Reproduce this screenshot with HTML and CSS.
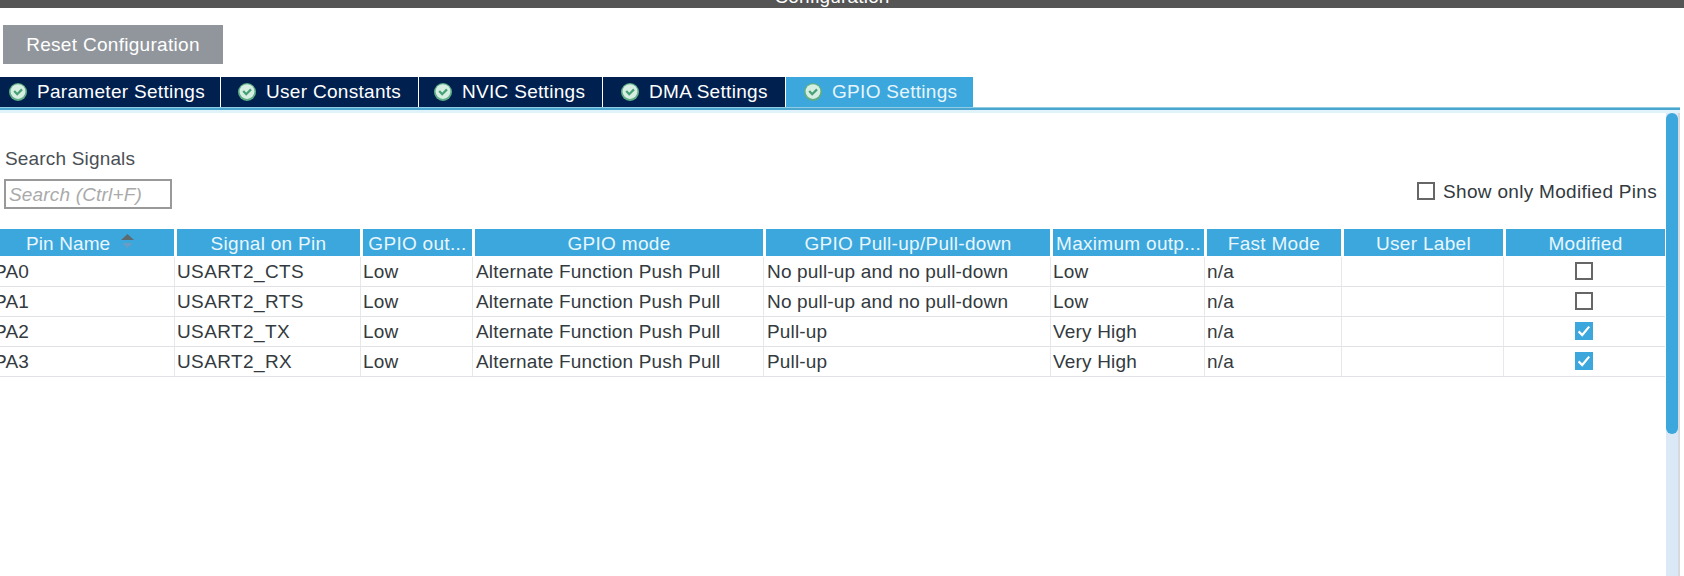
FILE: index.html
```html
<!DOCTYPE html>
<html lang="en">
<head>
  <meta charset="UTF-8" />
  <title>Configuration</title>
  <link rel="stylesheet" href="styles.css">
</head>
<body>

  <div class="titlebar"><span>Configuration</span></div>

  <div class="toolbar">
    <button class="reset" type="button">Reset Configuration</button>
  </div>

  <!-- tab icon is reused through <use> -->
  <svg class="defs" width="0" height="0">
    <symbol id="ok" viewBox="0 0 18 18">
      <circle cx="9" cy="9" r="9" fill="#5fae86"/>
      <circle cx="9" cy="8.6" r="7.4" fill="#d6efe2"/>
      <path d="M5.2 8 8.2 11.2 13 6.4" fill="none" stroke="#46a075" stroke-width="2.2"/>
    </symbol>
    <symbol id="tick" viewBox="0 0 18 18">
      <path d="M3.6 9.4 7.2 13 14.2 4.6" fill="none" stroke="#fff" stroke-width="2.2"/>
    </symbol>
  </svg>

  <div class="tabs">
    <div class="tab tab-1"><svg class="tab-icon"><use href="#ok"/></svg>Parameter Settings</div>
    <div class="tab tab-2"><svg class="tab-icon"><use href="#ok"/></svg>User Constants</div>
    <div class="tab tab-3"><svg class="tab-icon"><use href="#ok"/></svg>NVIC Settings</div>
    <div class="tab tab-4"><svg class="tab-icon"><use href="#ok"/></svg>DMA Settings</div>
    <div class="tab tab-5 active"><svg class="tab-icon"><use href="#ok"/></svg>GPIO Settings</div>
  </div>
  <div class="tab-line"></div>

  <div class="panel">
    <div class="content">

      <div class="search-row">
        <div class="search">
          <label for="search">Search Signals</label>
          <input id="search" type="text" placeholder="Search (Ctrl+F)" />
        </div>
        <div class="only-modified">
          <span class="box"></span>
          <span class="only-text">Show only Modified Pins</span>
        </div>
      </div>

      <div class="pins">
        <div class="head">
          <div class="sortable">Pin Name
            <svg class="sort" viewBox="0 0 13 14" width="13" height="14">
              <path d="M6.5 0 13 6H0Z" fill="#5d6a70"/>
              <path d="M1.5 9H11.5L6.5 14Z" fill="#6b9dc4"/>
            </svg>
          </div>
          <div>Signal on Pin</div>
          <div>GPIO out...</div>
          <div>GPIO mode</div>
          <div>GPIO Pull-up/Pull-down</div>
          <div>Maximum outp...</div>
          <div>Fast Mode</div>
          <div>User Label</div>
          <div>Modified</div>
        </div>

        <div class="row">
          <div class="pin">PA0</div><div>USART2_CTS</div><div>Low</div>
          <div class="wide">Alternate Function Push Pull</div><div class="wide">No pull-up and no pull-down</div>
          <div>Low</div><div>n/a</div><div></div>
          <div class="check"><span class="box"></span></div>
        </div>
        <div class="row">
          <div class="pin">PA1</div><div>USART2_RTS</div><div>Low</div>
          <div class="wide">Alternate Function Push Pull</div><div class="wide">No pull-up and no pull-down</div>
          <div>Low</div><div>n/a</div><div></div>
          <div class="check"><span class="box"></span></div>
        </div>
        <div class="row">
          <div class="pin">PA2</div><div>USART2_TX</div><div>Low</div>
          <div class="wide">Alternate Function Push Pull</div><div class="wide">Pull-up</div>
          <div>Very High</div><div>n/a</div><div></div>
          <div class="check"><span class="box on"><svg width="18" height="18"><use href="#tick"/></svg></span></div>
        </div>
        <div class="row">
          <div class="pin">PA3</div><div>USART2_RX</div><div>Low</div>
          <div class="wide">Alternate Function Push Pull</div><div class="wide">Pull-up</div>
          <div>Very High</div><div>n/a</div><div></div>
          <div class="check"><span class="box on"><svg width="18" height="18"><use href="#tick"/></svg></span></div>
        </div>
      </div>

    </div>

    <div class="scrollbar"><div class="thumb"></div></div>
  </div>

</body>
</html>
```

FILE: styles.css
```css
html, body {
  height: 100%;
}
body {
  margin: 0;
  width: 1684px;
  height: 576px;
  overflow: hidden;
  background: #ffffff;
  font-family: "Liberation Sans", Arial, sans-serif;
  font-size: 19px;
  letter-spacing: 0.17px;
  color: #333a40;
  display: flex;
  flex-direction: column;
}
.defs {
  position: absolute;
}

/* title bar, its text is cut off at the top */
.titlebar {
  flex: 0 0 8px;
  background: #555555;
  color: #ffffff;
  overflow: hidden;
  text-align: center;
  line-height: 8px;
}
.titlebar span {
  display: block;
  margin-top: -7px;
  margin-left: -20px;
}

.toolbar {
  flex: 0 0 69px;
  box-sizing: border-box;
  padding: 17px 0 0 3px;
}
.reset {
  display: block;
  width: 220px;
  height: 39px;
  padding: 0;
  border: none;
  background: #91969c;
  color: #ffffff;
  font: inherit;
  letter-spacing: 0.3px;
}

/* tabs */
.tabs {
  flex: 0 0 30px;
  display: flex;
  gap: 1px;
}
.tab {
  display: flex;
  align-items: center;
  background: #002050;
  color: #ffffff;
  box-sizing: border-box;
  padding-left: 9px;
  gap: 10px;
  letter-spacing: 0.3px;
}
.tab.active {
  background: #3ba7dc;
  color: #e6f5fc;
}
.tab-icon {
  width: 18px;
  height: 18px;
}
.tab-1 { width: 220px; }
.tab-2 { width: 197px; padding-left: 17px; }
.tab-3 { width: 183px; padding-left: 15px; }
.tab-4 { width: 182px; padding-left: 18px; }
.tab-5 { width: 187px; padding-left: 18px; }

.tab-line {
  flex: 0 0 3px;
  box-sizing: border-box;
  width: 1680px;
  background: #4ba6cf;
  border-top: 1px solid #8fcde6;
  box-shadow: 0 3px 0 #e0f2fa;
}

/* main area with scrollbar */
.panel {
  flex: 1;
  display: flex;
  width: 1680px;
  margin-top: 3px;
}
.content {
  flex: 0 0 1666px;
}
.scrollbar {
  flex: 0 0 12px;
  background: #dbe9f6;
}
.thumb {
  height: 321px;
  background: #3ba7dc;
  border-radius: 6px;
}
.panel::after {
  content: "";
  flex: 0 0 2px;
  background: #d5d8dc;
}

.search-row {
  display: flex;
  justify-content: space-between;
  align-items: flex-end;
  height: 96px;
  padding-right: 9px;
  box-sizing: border-box;
}
.search {
  display: flex;
  flex-direction: column;
  padding: 35px 0 0 4px;
}
.search label {
  line-height: 22px;
  margin: 0 0 9px 1px;
  color: #4a4f55;
}
.search input {
  box-sizing: border-box;
  width: 168px;
  height: 30px;
  margin: 0;
  padding: 1px 3px 0 3px;
  border: 2px solid #999999;
  border-radius: 0;
  outline: none;
  font: italic 19px "Liberation Sans", Arial, sans-serif;
  letter-spacing: 0.17px;
}
.search input::placeholder {
  color: #aaaaaa;
  opacity: 1;
}
.only-modified {
  display: flex;
  align-items: center;
  gap: 8px;
  height: 18px;
  margin-bottom: 9px;
  letter-spacing: 0.3px;
}
.only-text {
  padding-top: 2px;
}

.box {
  display: block;
  box-sizing: border-box;
  width: 18px;
  height: 18px;
  border: 2px solid #666666;
  background: #fff;
}
.box.on {
  border: none;
  background: #3ba7dc;
}
.box svg {
  display: block;
}

/* pin table */
.pins {
  margin-top: 20px;
}
.head, .row {
  display: grid;
  grid-template-columns: 177px 186px 112px 291px 287px 154px 137px 162px 159px;
  width: 1665px;
}
.head {
  height: 27px;
  margin-bottom: 1px;
}
.head > div {
  background: #3ba7dc;
  color: #e8f6fd;
  margin-right: 3px;
  line-height: 29px;
  text-align: center;
  white-space: nowrap;
  overflow: hidden;
  letter-spacing: 0.3px;
}
.head > div:last-child {
  margin-right: 0;
}
.head > .sortable {
  position: relative;
  text-align: left;
  padding-left: 26px;
  letter-spacing: 0.1px;
}
.sort {
  position: absolute;
  top: 5px;
  left: 121px;
}
.row {
  height: 30px;
  box-sizing: border-box;
  border-bottom: 1px solid #e0e2e5;
}
.row > div {
  line-height: 29px;
  margin-right: 2px;
  border-right: 1px solid #e6e8ea;
  white-space: nowrap;
  overflow: hidden;
}
.row > div:nth-child(2) {
  letter-spacing: 0.4px;
}
.row > .wide {
  padding-left: 1px;
}
.row > div:last-child {
  margin-right: 0;
  border-right: none;
}
.row .pin {
  text-indent: -6px;
}
.row .check {
  display: flex;
  justify-content: center;
  padding-top: 5px;
  padding-right: 4px;
}
```
